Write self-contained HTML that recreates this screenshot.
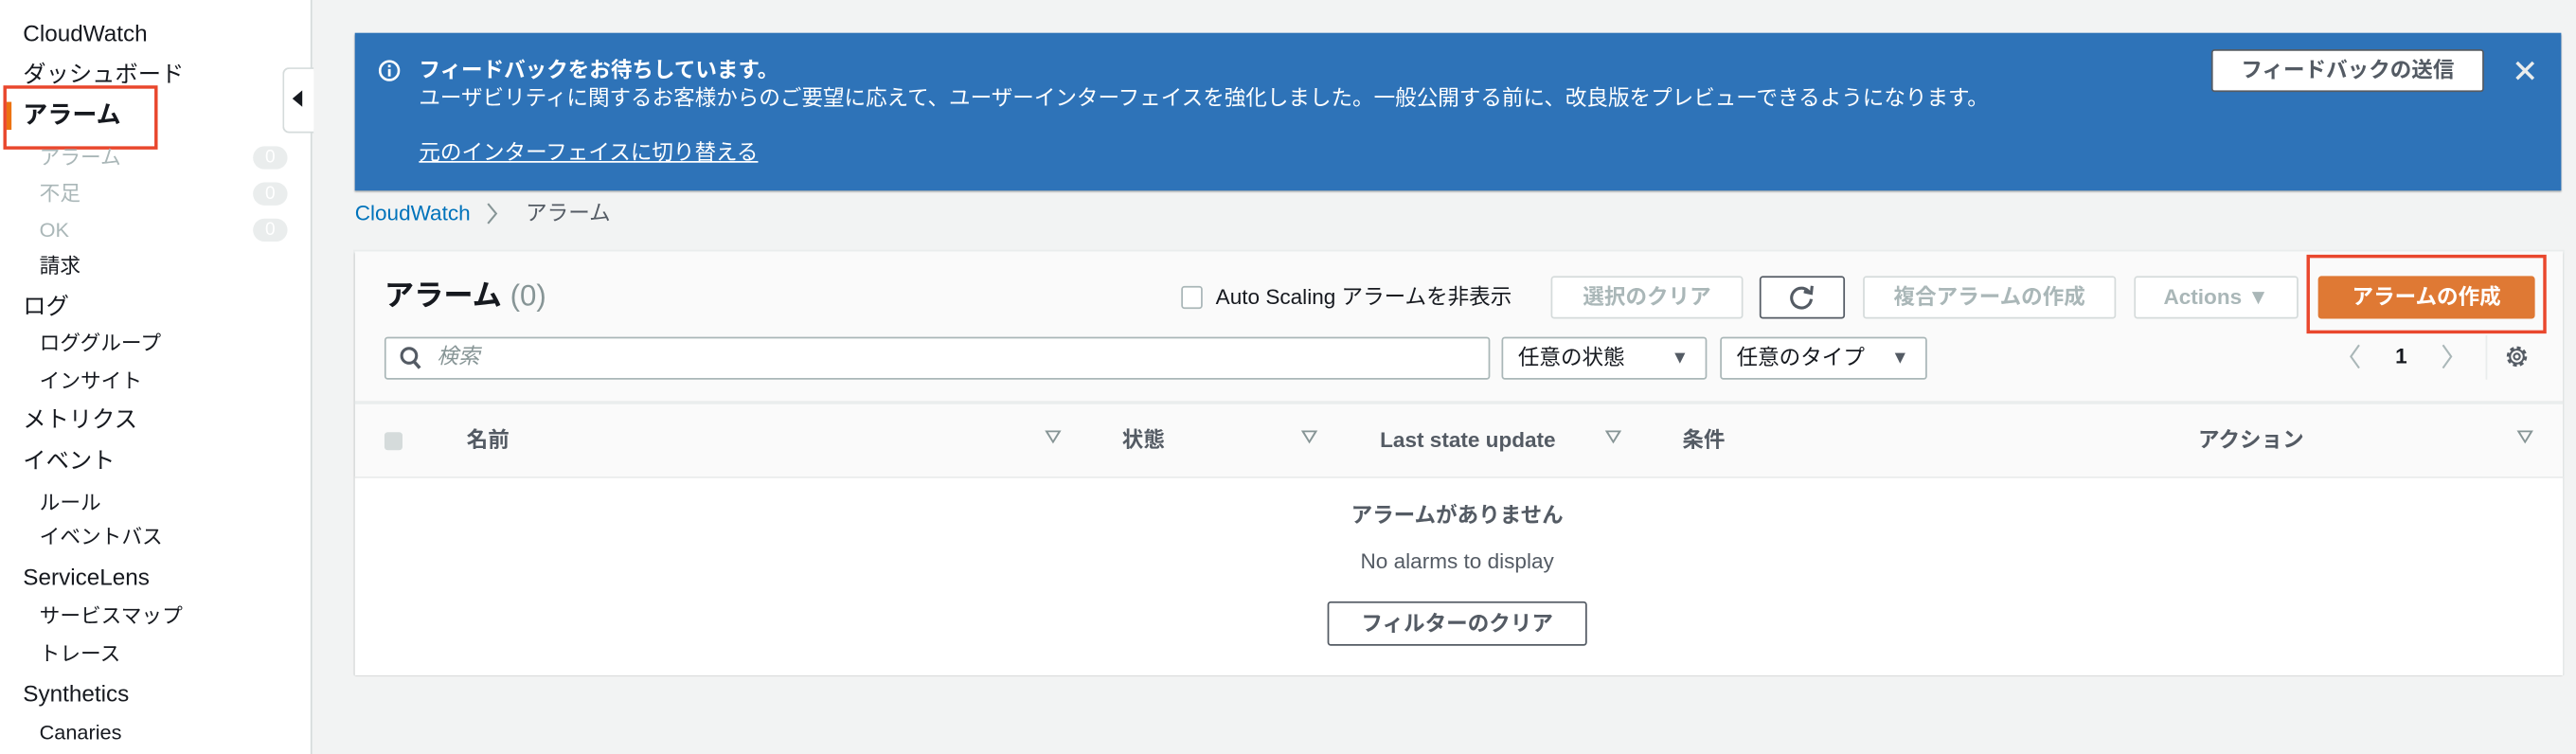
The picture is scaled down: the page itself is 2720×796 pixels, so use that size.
<!DOCTYPE html>
<html><head><meta charset="utf-8"><style>
html,body{margin:0;padding:0;width:2720px;height:796px;overflow:hidden;background:#f2f3f3}
#w{position:absolute;left:0;top:0;width:1568px;height:459px;transform:scale(1.73469);transform-origin:0 0;font-family:"Liberation Sans","Noto Sans CJK JP",sans-serif;color:#16191f}
.a{position:absolute;white-space:nowrap}
.sb{position:absolute;left:0;top:0;width:189px;height:459px;background:#fff;border-right:1px solid #d5dbdb}
.n{position:absolute;font-size:14px;line-height:16px;transform:translateY(-8px)}
.s{font-size:12.5px;left:24px}
.m{left:14px}
.g{color:#aab7b8}
.bd{position:absolute;left:154px;width:21px;height:14px;border-radius:7px;background:#eaeded;color:#fff;font-size:11px;text-align:center;line-height:14px}
.btn{position:absolute;top:168px;height:24px;border:1px solid #d5dbdb;border-radius:2px;background:#fff;font-size:13px;font-weight:bold;color:#aab7b8;text-align:center;line-height:24px}
.dd{position:absolute;top:205px;height:24px;border:1px solid #aab7b8;border-radius:2px;background:#fff;font-size:13px;line-height:24px;color:#16191f}
.th{position:absolute;top:260px;font-size:13px;font-weight:bold;color:#545b64;line-height:16px}
.tri{position:absolute;top:262px;width:0;height:0;border-left:5px solid transparent;border-right:5px solid transparent;border-top:8px solid #879596}
.tri:after{content:"";position:absolute;left:-3px;top:-7px;border-left:3px solid transparent;border-right:3px solid transparent;border-top:5px solid #fafafa}
</style></head><body><div id="w">
<div class="sb">
<div class="n m" style="top:20px">CloudWatch</div>
<div class="n m" style="top:45px">ダッシュボード</div>
<div style="position:absolute;left:4px;top:62px;width:3px;height:17px;background:#ec7211"></div>
<div class="n m" style="top:71px;font-weight:bold;font-size:15px">アラーム</div>
<div style="position:absolute;left:2px;top:52px;width:90px;height:35px;border:2px solid #e9472d"></div>
<div class="n s g" style="top:96px">アラーム</div><div class="bd" style="top:89px">0</div>
<div class="n s g" style="top:118px">不足</div><div class="bd" style="top:111px">0</div>
<div class="n s g" style="top:140px">OK</div><div class="bd" style="top:133px">0</div>
<div class="n s" style="top:162px">請求</div>
<div class="n m" style="top:186px">ログ</div>
<div class="n s" style="top:209px">ロググループ</div>
<div class="n s" style="top:232px">インサイト</div>
<div class="n m" style="top:255px">メトリクス</div>
<div class="n m" style="top:280px">イベント</div>
<div class="n s" style="top:306px">ルール</div>
<div class="n s" style="top:327px">イベントバス</div>
<div class="n m" style="top:351px">ServiceLens</div>
<div class="n s" style="top:375px">サービスマップ</div>
<div class="n s" style="top:398px">トレース</div>
<div class="n m" style="top:422px">Synthetics</div>
<div class="n s" style="top:446px">Canaries</div>
</div>
<div style="position:absolute;left:172px;top:41px;width:18px;height:38px;background:#fff;border:1px solid #d5dbdb;border-right:none;border-radius:4px 0 0 4px"></div>
<div style="position:absolute;left:178px;top:55px;border-top:5px solid transparent;border-bottom:5px solid transparent;border-right:6px solid #16191f"></div>

<div style="position:absolute;left:216px;top:20px;width:1343px;height:96px;background:#2e73b8;box-shadow:0 1px 1px rgba(0,0,0,.3)"></div>
<svg class="a" style="left:230px;top:36px" width="14" height="14"><circle cx="7" cy="7" r="5.7" fill="none" stroke="#fff" stroke-width="1.5"/><rect x="6.2" y="6" width="1.6" height="4.5" fill="#fff"/><rect x="6.2" y="3.4" width="1.6" height="1.6" fill="#fff"/></svg>
<div class="a" style="left:255px;top:35px;font-size:13px;font-weight:bold;color:#fff;line-height:16px">フィードバックをお待ちしています。</div>
<div class="a" style="left:255px;top:52px;font-size:13px;color:#fff;line-height:16px">ユーザビリティに関するお客様からのご要望に応えて、ユーザーインターフェイスを強化しました。一般公開する前に、改良版をプレビューできるようになります。</div>
<div class="a" style="left:255px;top:85px;font-size:13px;color:#fff;line-height:16px;text-decoration:underline">元のインターフェイスに切り替える</div>
<div class="a" style="left:1346px;top:30px;width:164px;height:24px;background:#fff;border:1px solid #545b64;border-radius:2px;font-size:13px;font-weight:bold;color:#545b64;text-align:center;line-height:24px">フィードバックの送信</div>
<svg class="a" style="left:1530px;top:36px" width="14" height="14"><path d="M2 2L12 12M12 2L2 12" stroke="#eaeded" stroke-width="2"/></svg>

<div class="a" style="left:216px;top:122px;font-size:13px;color:#0073bb;line-height:16px">CloudWatch</div>
<svg class="a" style="left:296px;top:123px" width="8" height="14"><path d="M1 1L6 7L1 13" stroke="#879596" fill="none" stroke-width="1.2"/></svg>
<div class="a" style="left:320px;top:122px;font-size:13px;color:#545b64;line-height:16px">アラーム</div>

<div style="position:absolute;left:216px;top:153px;width:1344px;height:257px;background:#fafafa;box-shadow:0 1px 1px rgba(0,0,0,.3),0 0 0 1px #eaeded"></div>
<div style="position:absolute;left:216px;top:290px;width:1344px;height:120px;background:#fff;border-top:1px solid #eaeded"></div>
<div style="position:absolute;left:216px;top:244px;width:1344px;height:2px;background:#eaeded"></div>
<div class="a" style="left:234px;top:169px;font-size:18px;font-weight:bold;line-height:22px">アラーム <span style="font-weight:normal;color:#879596">(0)</span></div>
<div class="a" style="left:719px;top:174px;width:11px;height:12px;border:1px solid #aab7b8;border-radius:2px;background:#fff"></div>
<div class="a" style="left:740px;top:173px;font-size:13px;line-height:16px">Auto Scaling アラームを非表示</div>
<div class="btn" style="left:944px;width:115px">選択のクリア</div>
<div class="btn" style="left:1071px;width:50px;border-color:#545b64"></div>
<svg class="a" style="left:1088px;top:172px" width="18" height="18"><path d="M13.5 6A6 6 0 1 0 14.5 10" stroke="#545b64" stroke-width="1.8" fill="none"/><path d="M10 5.5L14.5 6.5L15 2" stroke="#545b64" stroke-width="1.8" fill="none"/></svg>
<div class="btn" style="left:1134px;width:152px">複合アラームの作成</div>
<div class="btn" style="left:1299px;width:98px">Actions ▼</div>
<div class="btn" style="left:1411px;width:130px;background:#df7934;border-color:#df7934;color:#fff;top:168px">アラームの作成</div>
<div style="position:absolute;left:1404px;top:155px;width:142px;height:44px;border:2px solid #e9472d"></div>

<div class="a" style="left:234px;top:205px;width:671px;height:24px;border:1px solid #aab7b8;border-radius:2px;background:#fff"></div>
<svg class="a" style="left:243px;top:210px" width="14" height="16"><circle cx="6" cy="6.5" r="4.5" stroke="#545b64" stroke-width="1.8" fill="none"/><path d="M9 10L12.5 14" stroke="#545b64" stroke-width="2"/></svg>
<div class="a" style="left:266px;top:209px;font-size:13px;color:#879596;font-style:italic;line-height:16px">検索</div>
<div class="dd" style="left:914px;width:123px"><span style="margin-left:9px">任意の状態</span><span style="position:absolute;right:10px;font-size:11px;color:#545b64">▼</span></div>
<div class="dd" style="left:1047px;width:124px"><span style="margin-left:9px">任意のタイプ</span><span style="position:absolute;right:10px;font-size:11px;color:#545b64">▼</span></div>
<svg class="a" style="left:1430px;top:209px" width="8" height="16"><path d="M6 1L1 8L6 15" stroke="#aab7b8" fill="none" stroke-width="1.2"/></svg>
<div class="a" style="left:1458px;top:209px;font-size:13px;font-weight:bold;line-height:16px">1</div>
<svg class="a" style="left:1486px;top:209px" width="8" height="16"><path d="M1 1L6 8L1 15" stroke="#aab7b8" fill="none" stroke-width="1.2"/></svg>
<div class="a" style="left:1513px;top:204px;width:1px;height:27px;background:#eaeded"></div>
<svg class="a" style="left:1524px;top:209px" width="16" height="16"><circle cx="8" cy="8" r="5" stroke="#545b64" stroke-width="2.4" fill="none" stroke-dasharray="2.2 1.7"/><circle cx="8" cy="8" r="4.2" stroke="#545b64" stroke-width="1.2" fill="none"/><circle cx="8" cy="8" r="1.8" stroke="#545b64" stroke-width="1.2" fill="none"/></svg>

<div class="a" style="left:234px;top:263px;width:11px;height:11px;background:#d5dbdb;border-radius:2px"></div>
<div class="th" style="left:284px">名前</div><div class="tri" style="left:636px"></div>
<div class="th" style="left:683px">状態</div><div class="tri" style="left:792px"></div>
<div class="th" style="left:840px">Last state update</div><div class="tri" style="left:977px"></div>
<div class="th" style="left:1024px">条件</div>
<div class="th" style="left:1338px">アクション</div><div class="tri" style="left:1532px"></div>

<div class="a" style="left:0;width:1774px;top:306px;text-align:center;font-size:13px;font-weight:bold;color:#545b64;line-height:16px">アラームがありません</div>
<div class="a" style="left:0;width:1774px;top:334px;text-align:center;font-size:13px;color:#545b64;line-height:16px">No alarms to display</div>
<div class="a" style="left:808px;top:366px;width:156px;height:25px;border:1px solid #545b64;border-radius:2px;background:#fff;font-size:13px;font-weight:bold;color:#545b64;text-align:center;line-height:25px">フィルターのクリア</div>
</div></body></html>
